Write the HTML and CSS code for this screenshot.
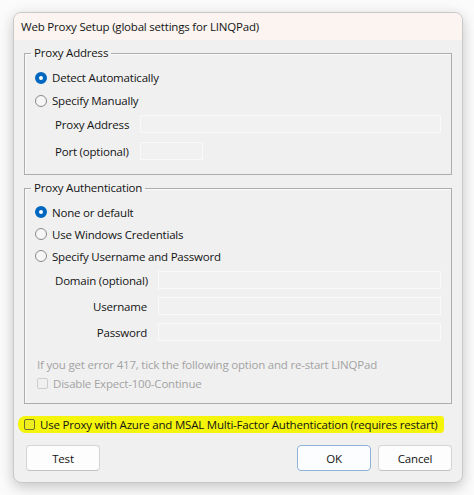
FILE: index.html
```html
<!DOCTYPE html>
<html>
<head>
<meta charset="utf-8">
<link rel="stylesheet" href="styles.css">
</head>
<body>
<div class="window">
  <div class="titlebar">Web Proxy Setup (global settings for LINQPad)</div>
  <div class="content">
    <fieldset class="group group-address">
      <legend>Proxy Address</legend>
      <div class="radios radios-address">
        <div class="radio-row"><span class="radio checked"></span><span>Detect Automatically</span></div>
        <div class="radio-row"><span class="radio"></span><span>Specify Manually</span></div>
      </div>
      <div class="fields fields-address">
        <span class="field-label">Proxy Address</span><span class="textbox"></span>
        <span class="field-label">Port (optional)</span><span class="textbox textbox-port"></span>
      </div>
    </fieldset>

    <fieldset class="group group-auth">
      <legend>Proxy Authentication</legend>
      <div class="radios radios-auth">
        <div class="radio-row"><span class="radio checked"></span><span>None or default</span></div>
        <div class="radio-row"><span class="radio"></span><span>Use Windows Credentials</span></div>
        <div class="radio-row"><span class="radio"></span><span>Specify Username and Password</span></div>
      </div>
      <div class="fields fields-auth">
        <span class="field-label">Domain (optional)</span><span class="textbox"></span>
        <span class="field-label">Username</span><span class="textbox"></span>
        <span class="field-label">Password</span><span class="textbox"></span>
      </div>
      <div class="note">If you get error 417, tick the following option and re-start LINQPad</div>
      <div class="check-row disabled"><span class="checkbox"></span><span>Disable Expect-100-Continue</span></div>
    </fieldset>

    <div class="highlight-row"><span class="checkbox"></span><span>Use Proxy with Azure and MSAL Multi-Factor Authentication (requires restart)</span></div>

    <div class="buttons">
      <button class="btn">Test</button>
      <span class="spacer"></span>
      <button class="btn btn-default">OK</button>
      <button class="btn">Cancel</button>
    </div>
  </div>
</div>
</body>
</html>
```

FILE: styles.css
```css
html, body {
  margin: 0;
  padding: 0;
}
body {
  background: #fbfbfb;
  font-family: "Open Sans", "Noto Sans", sans-serif;
  font-size: 11.5px;
  letter-spacing: -0.2px;
  color: #141414;
  padding: 12px 0 0 13px;
  height: 495px;
  box-sizing: border-box;
}
.window {
  width: 450px;
  height: 471px;
  box-sizing: border-box;
  background: #f0f0f0;
  border: 1px solid #c9c9c9;
  border-radius: 8px;
  box-shadow: 0 4px 14px rgba(0,0,0,0.22);
  overflow: hidden;
  display: flex;
  flex-direction: column;
}
.titlebar {
  height: 27px;
  background: #fbf4f1;
  padding-left: 7px;
  line-height: 28px;
  flex: none;
}
.content {
  padding: 0 10px 0 10px;
  display: flex;
  flex-direction: column;
}
.group {
  margin: 5px 0 0 0;
  padding: 0;
  border: 1px solid #adadad;
  box-shadow: inset 1px 1px 0 #fafafa;
  min-width: 0;
}
.group legend {
  margin-left: 6px;
  padding: 0 3px;
  line-height: 16px;
}
.radios {
  display: flex;
  flex-direction: column;
  padding-left: 10px;
}
.radios-address { padding-top: 5px; }
.radios-address .radio-row { height: 23px; }
.radios-auth { padding-top: 5px; }
.radios-auth .radio-row { height: 22px; }
.radio-row {
  display: flex;
  align-items: center;
  gap: 5px;
}
.radio {
  width: 12px;
  height: 12px;
  box-sizing: border-box;
  border-radius: 50%;
  border: 1px solid #8a8a8a;
  background: #f6f6f6;
  flex: none;
}
.radio.checked {
  border: 4px solid #0067c0;
  background: #ffffff;
}
.fields {
  display: grid;
  align-items: center;
}
.field-label {
  line-height: 18px;
  white-space: nowrap;
  padding-top: 2px;
}
.fields-address {
  grid-template-columns: 85px 301px;
  row-gap: 7px;
  padding-left: 30px;
  margin: 2px 0 13px 0;
}
.fields-auth {
  grid-template-columns: 92px 283px;
  column-gap: 11px;
  row-gap: 6px;
  padding-left: 30px;
  margin-top: 3px;
}
.fields-auth .field-label { text-align: right; }
.textbox {
  display: block;
  height: 18px;
  box-sizing: border-box;
  background: #f1f1f1;
  border: 1px solid #f9f9f9;
}
.textbox-port { width: 63px; }
.note {
  margin: 15px 0 0 12px;
  line-height: 16px;
  color: #a3a3a3;
  white-space: nowrap;
}
.check-row {
  display: flex;
  align-items: center;
  gap: 5px;
  height: 18px;
  margin: 1px 0 11px 12px;
}
.checkbox {
  width: 11px;
  height: 11px;
  box-sizing: border-box;
  border: 1px solid #7a7a7a;
  border-radius: 2px;
  background: #f5f5f5;
  flex: none;
}
.check-row.disabled { color: #a3a3a3; }
.check-row.disabled .checkbox {
  border-color: #cdcdcd;
  background: #f0f0f0;
}
.highlight-row {
  margin: 12px 0 0 -6px;
  width: 426px;
  height: 17px;
  box-sizing: border-box;
  padding-left: 6px;
  display: flex;
  align-items: center;
  gap: 5px;
  background: #f5f50c;
  border-radius: 7px 3px 4px 8px;
  white-space: nowrap;
}
.highlight-row .checkbox {
  background: #eded20;
  border-color: #6f6f2a;
}
.buttons {
  display: flex;
  gap: 7px;
  margin-top: 12px;
  padding-left: 2px;
}
.spacer { flex: 1; }
.btn {
  width: 74px;
  height: 26px;
  font-family: inherit;
  font-size: 11.5px;
  letter-spacing: -0.2px;
  color: #141414;
  background: #fdfdfd;
  border: 1px solid #d4d4d4;
  border-bottom-color: #c2c2c2;
  border-radius: 4px;
  padding: 0;
}
.btn-default {
  border-color: #8fb1d8;
  background: #fcfdfe;
}
```
